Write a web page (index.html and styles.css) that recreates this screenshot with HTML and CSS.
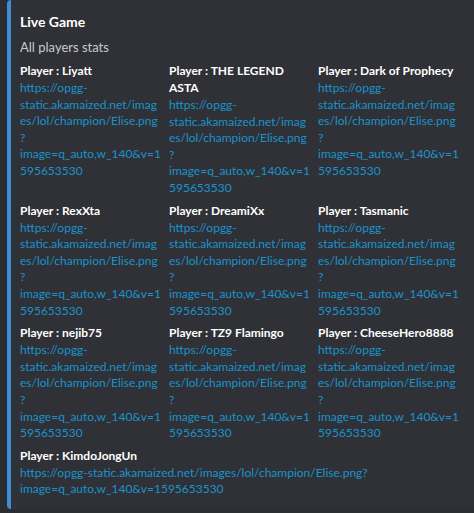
FILE: index.html
```html
<!DOCTYPE html>
<html lang="en">
<head>
  <meta charset="UTF-8" />
  <title>Live Game</title>
  <link rel="stylesheet" href="styles.css">
</head>
<body>

  <div class="embed">
    <div class="embed-title">Live Game</div>
    <div class="embed-desc">All players stats</div>

    <div class="fields">
      <div class="field">
        <div class="field-name">Player : Liyatt</div>
        <a class="field-value" href="#">https://opgg-static.akamaized.net/images/lol/champion/Elise.png?image=q_auto,w_140&amp;v=1595653530</a>
      </div>
      <div class="field">
        <div class="field-name">Player : THE LEGEND ASTA</div>
        <a class="field-value" href="#">https://opgg-static.akamaized.net/images/lol/champion/Elise.png?image=q_auto,w_140&amp;v=1595653530</a>
      </div>
      <div class="field">
        <div class="field-name">Player : Dark of Prophecy</div>
        <a class="field-value" href="#">https://opgg-static.akamaized.net/images/lol/champion/Elise.png?image=q_auto,w_140&amp;v=1595653530</a>
      </div>

      <div class="field">
        <div class="field-name">Player : RexXta</div>
        <a class="field-value" href="#">https://opgg-static.akamaized.net/images/lol/champion/Elise.png?image=q_auto,w_140&amp;v=1595653530</a>
      </div>
      <div class="field">
        <div class="field-name">Player : DreamiXx</div>
        <a class="field-value" href="#">https://opgg-static.akamaized.net/images/lol/champion/Elise.png?image=q_auto,w_140&amp;v=1595653530</a>
      </div>
      <div class="field">
        <div class="field-name">Player : Tasmanic</div>
        <a class="field-value" href="#">https://opgg-static.akamaized.net/images/lol/champion/Elise.png?image=q_auto,w_140&amp;v=1595653530</a>
      </div>

      <div class="field">
        <div class="field-name">Player : nejib75</div>
        <a class="field-value" href="#">https://opgg-static.akamaized.net/images/lol/champion/Elise.png?image=q_auto,w_140&amp;v=1595653530</a>
      </div>
      <div class="field">
        <div class="field-name">Player : TZ9 Flamingo</div>
        <a class="field-value" href="#">https://opgg-static.akamaized.net/images/lol/champion/Elise.png?image=q_auto,w_140&amp;v=1595653530</a>
      </div>
      <div class="field">
        <div class="field-name">Player : CheeseHero8888</div>
        <a class="field-value" href="#">https://opgg-static.akamaized.net/images/lol/champion/Elise.png?image=q_auto,w_140&amp;v=1595653530</a>
      </div>

      <div class="field field-wide">
        <div class="field-name">Player : KimdoJongUn</div>
        <a class="field-value" href="#">https://opgg-static.akamaized.net/images/lol/champion/Elise.png?image=q_auto,w_140&amp;v=1595653530</a>
      </div>
    </div>
  </div>

</body>
</html>
```

FILE: styles.css
```css
body {
  margin: 0;
  background-color: #2b2d31;
  font-family: 'Lato', sans-serif;
  overflow: hidden;
}

.embed {
  margin: 0 0 0 7px;
  width: calc(100% - 7px);
  height: 509px;
  box-sizing: border-box;
  background-color: #2f3136;
  border-left: 4px solid #3a8fd6;
  border-radius: 4px 0 0 4px;
  padding: 12px 0 0 9px;
}

.embed-title {
  color: #ffffff;
  font-size: 14px;
  font-weight: 700;
  line-height: 20px;
}

.embed-desc {
  color: #c9cacd;
  font-size: 13px;
  line-height: 16px;
  margin-top: 7px;
}

.fields {
  display: grid;
  grid-template-columns: 141px 141px 141px;
  column-gap: 8px;
  row-gap: 5px;
  margin-top: 7px;
}

.field-wide {
  grid-column: 1 / 4;
}

.field-name {
  color: #ffffff;
  font-size: 12px;
  font-weight: 700;
  line-height: 17px;
  margin-bottom: 1px;
}

.field-value {
  display: block;
  color: #1a93cc;
  text-decoration: none;
  font-size: 12px;
  line-height: 16.6px;
  overflow-wrap: anywhere;
}
```
